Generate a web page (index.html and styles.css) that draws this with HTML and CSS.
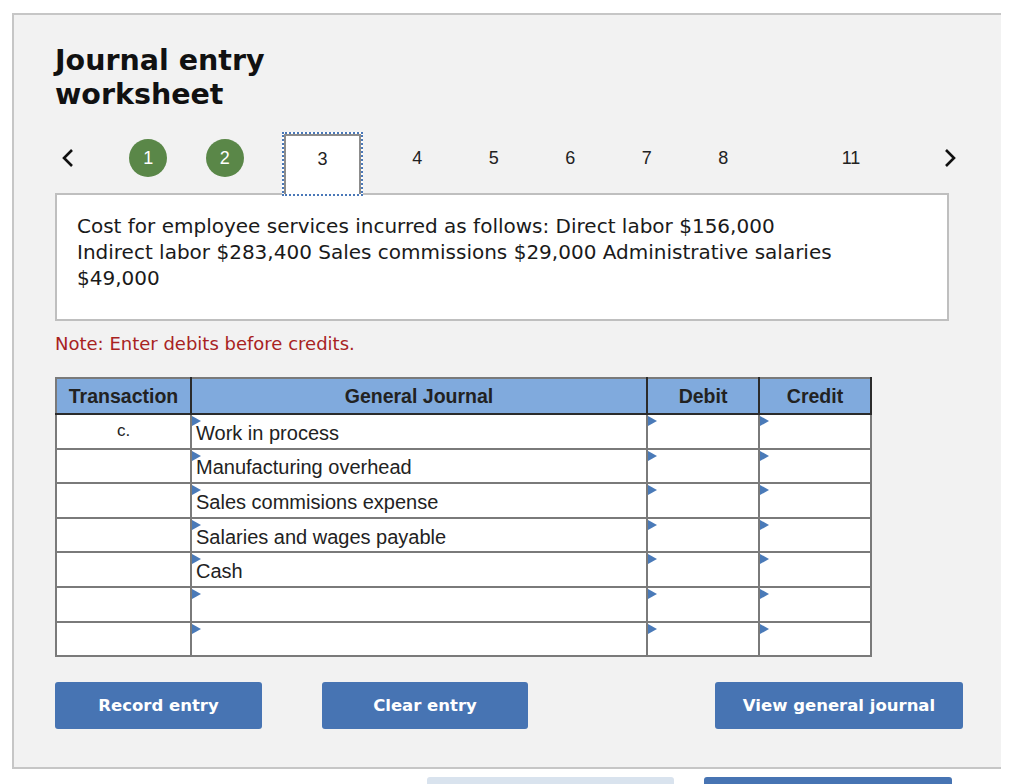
FILE: index.html
```html
<!DOCTYPE html>
<html lang="en">

<head>
    <meta charset="UTF-8">
    <title>Journal entry worksheet</title>
    <link rel="stylesheet" href="styles.css">
</head>

<body>

    <div class="panel">
        <h1 class="title">Journal entry<br>worksheet</h1>

        <div class="steps">
            <span class="nav-arrow prev">
                <svg width="14" height="20" viewBox="0 0 14 20"><polyline points="11,2 3,10 11,18" /></svg>
            </span>
            <span class="step first"><span class="done">1</span></span>
            <span class="step"><span class="done">2</span></span>
            <span class="step-current"><span class="current-inner">3</span></span>
            <span class="step">4</span>
            <span class="step">5</span>
            <span class="step">6</span>
            <span class="step">7</span>
            <span class="step">8</span>
            <span class="step last">11</span>
            <span class="nav-arrow next">
                <svg width="14" height="20" viewBox="0 0 14 20"><polyline points="3,2 11,10 3,18" /></svg>
            </span>
        </div>

        <div class="question">
            <p>Cost for employee services incurred as follows: Direct labor $156,000 Indirect labor $283,400 Sales commissions $29,000 Administrative salaries $49,000</p>
        </div>

        <div class="note">Note: Enter debits before credits.</div>

        <table class="journal">
            <thead>
                <tr>
                    <th class="col-trans">Transaction</th>
                    <th class="col-account">General Journal</th>
                    <th class="col-debit">Debit</th>
                    <th class="col-credit">Credit</th>
                </tr>
            </thead>
            <tbody>
                <tr>
                    <td class="trans">c.</td>
                    <td class="pick">Work in process</td>
                    <td class="pick"></td>
                    <td class="pick"></td>
                </tr>
                <tr>
                    <td class="trans"></td>
                    <td class="pick">Manufacturing overhead</td>
                    <td class="pick"></td>
                    <td class="pick"></td>
                </tr>
                <tr>
                    <td class="trans"></td>
                    <td class="pick">Sales commisions expense</td>
                    <td class="pick"></td>
                    <td class="pick"></td>
                </tr>
                <tr>
                    <td class="trans"></td>
                    <td class="pick">Salaries and wages payable</td>
                    <td class="pick"></td>
                    <td class="pick"></td>
                </tr>
                <tr>
                    <td class="trans"></td>
                    <td class="pick">Cash</td>
                    <td class="pick"></td>
                    <td class="pick"></td>
                </tr>
                <tr>
                    <td class="trans"></td>
                    <td class="pick"></td>
                    <td class="pick"></td>
                    <td class="pick"></td>
                </tr>
                <tr>
                    <td class="trans"></td>
                    <td class="pick"></td>
                    <td class="pick"></td>
                    <td class="pick"></td>
                </tr>
            </tbody>
        </table>

        <div class="actions">
            <button class="btn btn-record">Record entry</button>
            <button class="btn btn-clear">Clear entry</button>
            <button class="btn btn-view">View general journal</button>
        </div>
    </div>

    <div class="below">
        <span class="below-btn light"></span>
        <span class="below-btn dark"></span>
    </div>

</body>

</html>
```

FILE: styles.css
```css
body {
    margin: 0;
    background: #ffffff;
    font-family: 'DejaVu Sans', Verdana, sans-serif;
    color: #222;
    overflow: hidden;
}

.panel {
    margin: 13px 0 0 12px;
    width: 946px;
    background: #f2f2f2;
    border: 2px solid #c6c6c6;
    border-right: 0;
    padding: 29px 0 38px 41px;
}

.title {
    margin: 0;
    font-size: 28.5px;
    line-height: 34px;
    font-weight: bold;
    color: #111;
}

/* step navigation */
.steps {
    position: relative;
    z-index: 1;
    display: flex;
    align-items: center;
    height: 52px;
    margin-top: 20px;
    font-family: 'Liberation Sans', Arial, sans-serif;
    font-size: 18px;
    color: #222;
}

.nav-arrow {
    display: flex;
    justify-content: center;
    width: 26px;
}

.nav-arrow svg polyline {
    fill: none;
    stroke: #111;
    stroke-width: 2.6;
}

.nav-arrow.next {
    width: 20px;
    margin-left: 50px;
}

.step {
    display: flex;
    justify-content: center;
    width: 76.5px;
}

.step.first {
    margin-left: 29px;
}

.step.last {
    width: 77px;
    margin-left: 51px;
}

.done {
    display: flex;
    align-items: center;
    justify-content: center;
    width: 38px;
    height: 38px;
    border-radius: 50%;
    background: #5a8748;
    color: #fff;
    font-size: 18px;
}

.step-current {
    box-sizing: border-box;
    align-self: flex-start;
    width: 81px;
    height: 64px;
    margin: 0 16px 0 19px;
    border: 2px dotted #4a78b8;
    background: #fff;
}

.current-inner {
    box-sizing: border-box;
    display: flex;
    justify-content: center;
    padding-top: 13px;
    height: 100%;
    border: 2px solid #8c8c8c;
    border-bottom: 0;
}

/* question */
.question {
    box-sizing: border-box;
    width: 894px;
    height: 128px;
    margin-top: 9px;
    background: #fff;
    border: 2px solid #bfbfbf;
    padding: 18px 0 0 20px;
}

.question p {
    margin: 0;
    width: 770px;
    font-size: 20px;
    line-height: 26px;
    color: #1a1a1a;
}

.note {
    margin-top: 12px;
    font-size: 18px;
    line-height: 22px;
    color: #a8231f;
}

/* journal table */
.journal {
    margin-top: 22px;
    width: 817px;
    border-collapse: collapse;
    font-family: 'Liberation Sans', Arial, sans-serif;
    background: #fff;
}

.journal th {
    height: 34px;
    padding: 0;
    background: #80aadd;
    border: 2px solid #2b2b2b;
    border-top-color: #7a7a7a;
    font-size: 19.5px;
    font-weight: bold;
    color: #222;
}

.journal th.col-trans {
    border-left-color: #7a7a7a;
}

.col-trans {
    width: 133px;
}

.col-account {
    width: 454px;
}

.col-debit {
    width: 110px;
}

.journal td {
    height: 32.6px;
    padding: 0;
    border: 2px solid #7a7a7a;
    font-size: 20px;
    color: #222;
    vertical-align: middle;
}

.journal td.trans {
    text-align: center;
    font-size: 17px;
}

.journal td.pick {
    position: relative;
    height: 28.6px;
    padding: 4px 0 0 4px;
}

.journal td.pick::before {
    content: "";
    position: absolute;
    left: 0;
    top: 1px;
    border-top: 5.5px solid transparent;
    border-bottom: 5.5px solid transparent;
    border-left: 9px solid #4a7ab8;
}

/* buttons */
.actions {
    display: flex;
    margin-top: 25px;
}

.btn {
    height: 47px;
    border: 0;
    border-radius: 3px;
    background: #4774b3;
    color: #fff;
    font-family: 'DejaVu Sans', Verdana, sans-serif;
    font-size: 16.5px;
    font-weight: bold;
}

.btn-record {
    width: 207px;
}

.btn-clear {
    width: 206px;
    margin-left: 60px;
}

.btn-view {
    width: 248px;
    margin-left: 187px;
}

.below {
    display: flex;
    margin: 8px 0 0 427px;
}

.below-btn {
    width: 247px;
    height: 20px;
    border-radius: 3px;
}

.below-btn.light {
    background: #d9e3ee;
}

.below-btn.dark {
    margin-left: 30px;
    width: 248px;
    background: #4774b3;
}
```
